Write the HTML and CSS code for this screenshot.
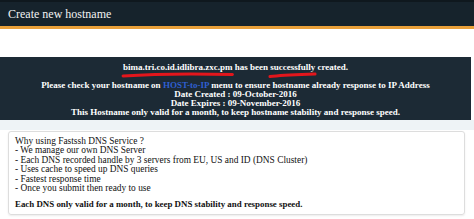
FILE: index.html
```html
<!DOCTYPE html>
<html lang="en">
  <head>
    <meta charset="UTF-8" />
    <title>Create new hostname</title>
    <link rel="stylesheet" href="styles.css">
  </head>
  <body>
    <div class="header">
      <h1>Create new hostname</h1>
    </div>
    <div class="gap"></div>
    <div class="notice">
      <p class="first">
        <span class="mark">bima.tri.co.id.idlibra.zxc.pm<svg class="scribble" viewBox="0 0 110 6" preserveAspectRatio="none"><path d="M2 4 C 30 2, 70 1.5, 108 2.5" /></svg></span>
        has been
        <span class="mark">successfully<svg class="scribble" viewBox="0 0 50 6" preserveAspectRatio="none"><path d="M2 4.5 C 15 3, 35 2.5, 48 2" /></svg></span>
        created.
      </p>
      <p>Please check your hostname on <a href="#">HOST-to-IP</a> menu to ensure hostname already response to IP Address<br>
      Date Created : 09-October-2016<br>
      Date Expires : 09-November-2016<br>
      This Hostname only valid for a month, to keep hostname stability and response speed.</p>
    </div>
    <div class="band"></div>
    <div class="info">
      <p>Why using Fastssh DNS Service ?<br>
      - We manage our own DNS Server<br>
      - Each DNS recorded handle by 3 servers from EU, US and ID (DNS Cluster)<br>
      - Uses cache to speed up DNS queries<br>
      - Fastest response time<br>
      - Once you submit then ready to use</p>
      <p class="strong">Each DNS only valid for a month, to keep DNS stability and response speed.</p>
    </div>
  </body>
</html>
```

FILE: styles.css
```css
body {
  margin: 0;
  font-family: "Liberation Serif", "Times New Roman", serif;
  background: #fff;
  width: 474px;
  height: 219px;
  overflow: hidden;
}
.header {
  background: #16232c;
  border-top: 2px solid #0f181e;
  border-bottom: 3px solid #e9a03a;
  height: 24px;
  padding: 0 8px;
}
.header h1 {
  margin: 0;
  color: #f2f2f2;
  font-weight: normal;
  font-size: 12px;
  line-height: 24px;
}
.gap {
  height: 28px;
}
.notice {
  background: #1c2a35;
  color: #fff;
  text-align: center;
  font-weight: bold;
  font-size: 9px;
  line-height: 9px;
  padding: 6px 0 6px;
  margin-right: 3px;
  height: 51px;
}
.notice p {
  margin: 0;
}
.notice .first {
  margin-bottom: 9px;
}
.notice a {
  color: #2f5fd0;
  text-decoration: none;
}
.mark {
  position: relative;
}
.scribble {
  position: absolute;
  left: -2px;
  right: -2px;
  bottom: -6px;
  width: calc(100% + 4px);
  height: 6px;
  overflow: visible;
}
.scribble path {
  fill: none;
  stroke: #e3161c;
  stroke-width: 3;
  stroke-linecap: round;
  vector-effect: non-scaling-stroke;
}
.band {
  height: 10px;
  background: #eef3f6;
}
.info {
  margin: 1px 9px 0 8px;
  border: 1px solid #ddd;
  border-radius: 3px;
  box-shadow: 0 1px 2px rgba(0, 0, 0, 0.08);
  padding: 5px 6px 4px;
  font-size: 9.4px;
  line-height: 9.4px;
  color: #111;
}
.info p {
  margin: 0 0 7px;
}
.info .strong {
  font-weight: bold;
  font-size: 8.9px;
  line-height: 9.4px;
  margin: 0;
}
```
